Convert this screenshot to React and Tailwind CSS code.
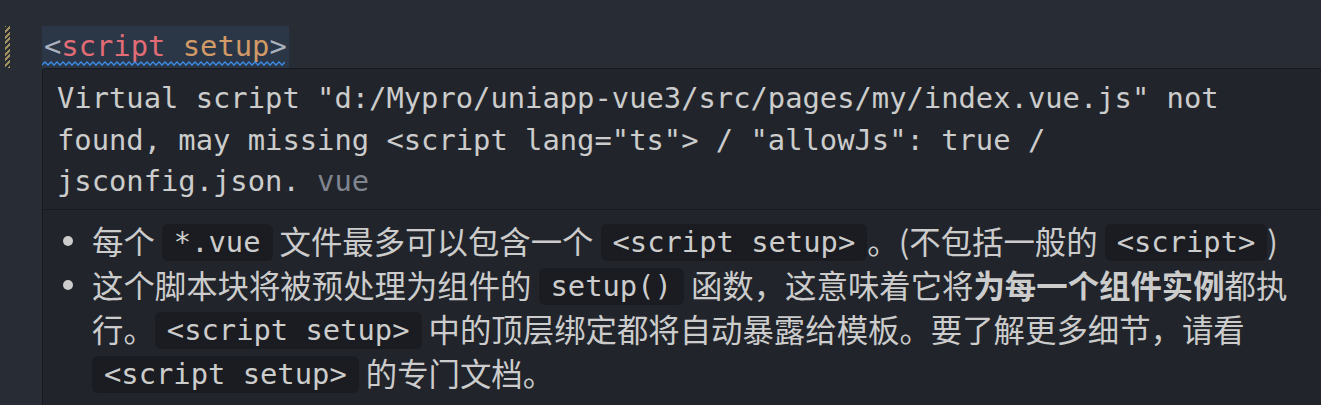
const MONO = "font-['DejaVu_Sans_Mono','Liberation_Mono',monospace]"
const CJK = "font-['Noto_Sans_CJK_SC','Noto_Sans',sans-serif]"

function Code({ children }) {
  return (
    <span className={`${MONO} inline-block bg-[#1a1c21] rounded-[6px] px-[12px] leading-[37px] text-[28.8px] align-[2px]`}>
      {children}
    </span>
  )
}

function Squiggle({ width }) {
  const pts = []
  for (let x = 0; x <= width; x += 3) {
    pts.push(`${x},${(x / 3) % 2 === 0 ? 4 : 1}`)
  }
  return (
    <svg width={width} height="6" className="absolute left-0 bottom-[1px]">
      <polyline points={pts.join(' ')} fill="none" stroke="#3b8eea" strokeWidth="1.3" />
    </svg>
  )
}

export default function App() {
  return (
    <div className="relative w-[1321px] h-[405px] overflow-hidden bg-[#282c34] text-[#cccccc]">
      <div className="flex pt-[26px]">
        <div className="ml-[5px] w-[5px] h-[42px] bg-[repeating-linear-gradient(-45deg,#a0915e_0px,#a0915e_2px,transparent_2px,transparent_4px)]" />
        <div className={`${MONO} relative ml-[32px] h-[42px] px-[2px] bg-[#2b3646] text-[28.8px] leading-[40px]`}>
          <span className="text-[#abb2bf]">&lt;</span>
          <span className="text-[#e06c75]">script</span>{' '}
          <span className="text-[#d19a66]">setup</span>
          <span className="text-[#abb2bf]">&gt;</span>
          <Squiggle width={243} />
        </div>
      </div>

      <div className="absolute left-[42px] top-[68px] w-[1300px] bg-[#21252b] border border-[#181a1f] rounded-tl-[4px]">
        <div className={`${MONO} pl-[14px] pt-[9px] pb-[6px] text-[28.8px] leading-[41.5px]`}>
          Virtual script "d:/Mypro/uniapp-vue3/src/pages/my/index.vue.js" not
          <br />
          found, may missing &lt;script lang="ts"&gt; / "allowJs": true /
          <br />
          jsconfig.json. <span className="text-[#7f848e]">vue</span>
        </div>
        <div className="h-px bg-[#181a1f]" />
        <ul className={`${CJK} pt-[9px] pb-[20px] text-[31.4px] leading-[44.3px] whitespace-nowrap`}>
          <li className="flex">
            <span className="mt-[17px] ml-[20px] mr-[19px] w-[10px] h-[10px] rounded-full bg-[#cccccc] shrink-0" />
            <span>
              每个 <Code>*.vue</Code> 文件最多可以包含一个 <Code>&lt;script setup&gt;</Code>。(不包括一般的 <Code>&lt;script&gt;</Code>)
            </span>
          </li>
          <li className="flex">
            <span className="mt-[17px] ml-[20px] mr-[19px] w-[10px] h-[10px] rounded-full bg-[#cccccc] shrink-0" />
            <span>
              这个脚本块将被预处理为组件的 <Code>setup()</Code> 函数，这意味着它将<b className="font-bold">为每一个组件实例</b>都执
              <br />
              行。<Code>&lt;script setup&gt;</Code> 中的顶层绑定都将自动暴露给模板。要了解更多细节，请看
              <br />
              <Code>&lt;script setup&gt;</Code> 的专门文档。
            </span>
          </li>
        </ul>
      </div>
    </div>
  )
}
